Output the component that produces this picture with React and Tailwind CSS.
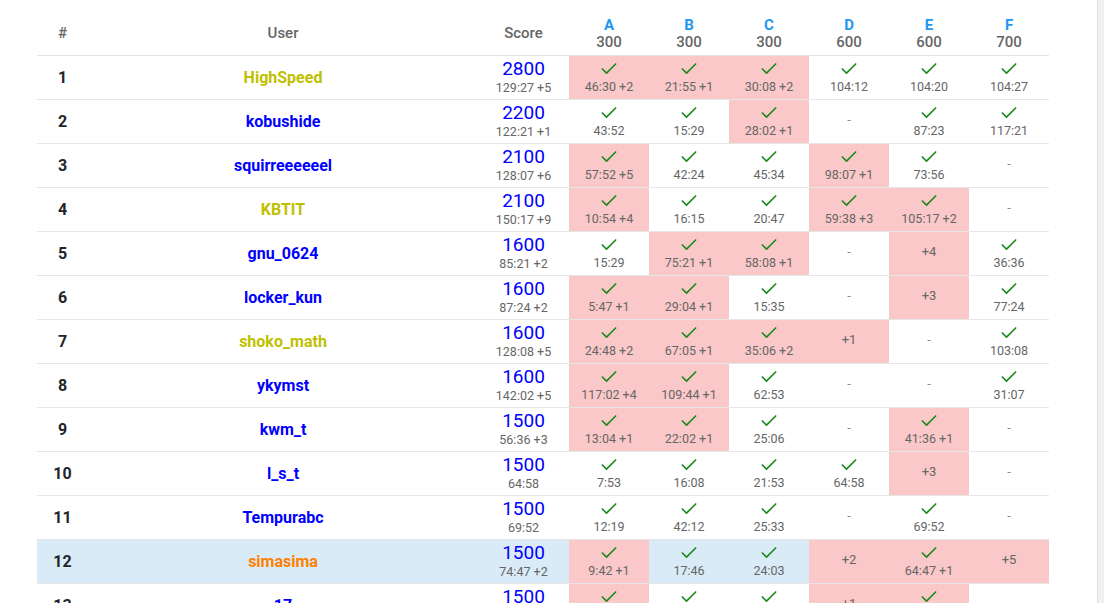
import { Check } from 'lucide-react'

const problems = [
  { id: 'A', points: 300 },
  { id: 'B', points: 300 },
  { id: 'C', points: 300 },
  { id: 'D', points: 600 },
  { id: 'E', points: 600 },
  { id: 'F', points: 700 }
]

const yellow = 'text-[#c0c000]'
const blue = 'text-[#0000ff]'
const orange = 'text-[#ff8000]'

// a cell is '-' (no submission), '+N' (only wrong answers) or an AC time with optional penalty
const rows = [
  { rank: 1, user: 'HighSpeed', color: yellow, score: 2800, penalty: '129:27 +5', cells: ['46:30 +2', '21:55 +1', '30:08 +2', '104:12', '104:20', '104:27'] },
  { rank: 2, user: 'kobushide', color: blue, score: 2200, penalty: '122:21 +1', cells: ['43:52', '15:29', '28:02 +1', '-', '87:23', '117:21'] },
  { rank: 3, user: 'squirreeeeeel', color: blue, score: 2100, penalty: '128:07 +6', cells: ['57:52 +5', '42:24', '45:34', '98:07 +1', '73:56', '-'] },
  { rank: 4, user: 'KBTIT', color: yellow, score: 2100, penalty: '150:17 +9', cells: ['10:54 +4', '16:15', '20:47', '59:38 +3', '105:17 +2', '-'] },
  { rank: 5, user: 'gnu_0624', color: blue, score: 1600, penalty: '85:21 +2', cells: ['15:29', '75:21 +1', '58:08 +1', '-', '+4', '36:36'] },
  { rank: 6, user: 'locker_kun', color: blue, score: 1600, penalty: '87:24 +2', cells: ['5:47 +1', '29:04 +1', '15:35', '-', '+3', '77:24'] },
  { rank: 7, user: 'shoko_math', color: yellow, score: 1600, penalty: '128:08 +5', cells: ['24:48 +2', '67:05 +1', '35:06 +2', '+1', '-', '103:08'] },
  { rank: 8, user: 'ykymst', color: blue, score: 1600, penalty: '142:02 +5', cells: ['117:02 +4', '109:44 +1', '62:53', '-', '-', '31:07'] },
  { rank: 9, user: 'kwm_t', color: blue, score: 1500, penalty: '56:36 +3', cells: ['13:04 +1', '22:02 +1', '25:06', '-', '41:36 +1', '-'] },
  { rank: 10, user: 'l_s_t', color: blue, score: 1500, penalty: '64:58', cells: ['7:53', '16:08', '21:53', '64:58', '+3', '-'] },
  { rank: 11, user: 'Tempurabc', color: blue, score: 1500, penalty: '69:52', cells: ['12:19', '42:12', '25:33', '-', '69:52', '-'] },
  { rank: 12, user: 'simasima', color: orange, score: 1500, penalty: '74:47 +2', cells: ['9:42 +1', '17:46', '24:03', '+2', '64:47 +1', '+5'], me: true },
  { rank: 13, user: '17', color: blue, score: 1500, penalty: '88:10 +3', cells: ['11:02 +1', '19:40', '27:15', '+1', '70:21 +1', '-'] }
]

const grid = 'grid grid-cols-[51px_390px_91px_repeat(6,80px)]'

function Cell({ value }) {
  const pink = value.includes('+')

  let content
  if (value === '-') {
    content = <span className="text-[13px] text-[#8a8a8a]">-</span>
  } else if (value.startsWith('+')) {
    content = <span className="text-[13px] text-[#666]">{value}</span>
  } else {
    content = (
      <>
        <Check size={20} strokeWidth={2} className="text-[#1f8a1f]" />
        <span className="text-[12.5px] leading-[15px] text-[#666]">{value}</span>
      </>
    )
  }

  return (
    <div className={`flex flex-col items-center justify-center pb-[3px] ${pink ? 'bg-[#fac8c8]' : ''}`}>
      {content}
    </div>
  )
}

export default function App() {
  return (
    <div className="flex h-[603px] w-full overflow-hidden bg-white font-[Roboto,sans-serif]">
      <div className="flex-1 pl-[37px]">
        <div className="w-[1012px]">
          <div className={`${grid} h-[56px] border-b border-[#e3e3e3] pt-3 text-[15px] font-medium text-[#666]`}>
            <div className="flex items-center justify-center">#</div>
            <div className="flex items-center justify-center">User</div>
            <div className="flex items-center justify-center">Score</div>
            {problems.map(p => (
              <div key={p.id} className="flex flex-col items-center justify-center leading-[17px]">
                <span className="font-bold text-[#2196f3]">{p.id}</span>
                <span>{p.points}</span>
              </div>
            ))}
          </div>

          {rows.map(r => (
            <div
              key={r.rank}
              className={`${grid} h-[44px] border-b border-[#e6e6e6] ${r.me ? 'bg-[#d9ebf6]' : ''}`}
            >
              <div className="flex items-center justify-center text-[16px] font-bold text-[#212529]">{r.rank}</div>
              <div className={`flex items-center justify-center text-[16px] font-bold ${r.color}`}>{r.user}</div>
              <div className="flex flex-col items-center justify-center pb-[2px]">
                <span className="text-[19px] leading-[22px] text-[#0000ff]">{r.score}</span>
                <span className="text-[12.5px] leading-[15px] text-[#666]">{r.penalty}</span>
              </div>
              {r.cells.map((c, i) => (
                <Cell key={i} value={c} />
              ))}
            </div>
          ))}
        </div>
      </div>
      <div className="h-full w-[7px] border-l border-[#e2e2e2] bg-[#f1f1f1]" />
    </div>
  )
}
